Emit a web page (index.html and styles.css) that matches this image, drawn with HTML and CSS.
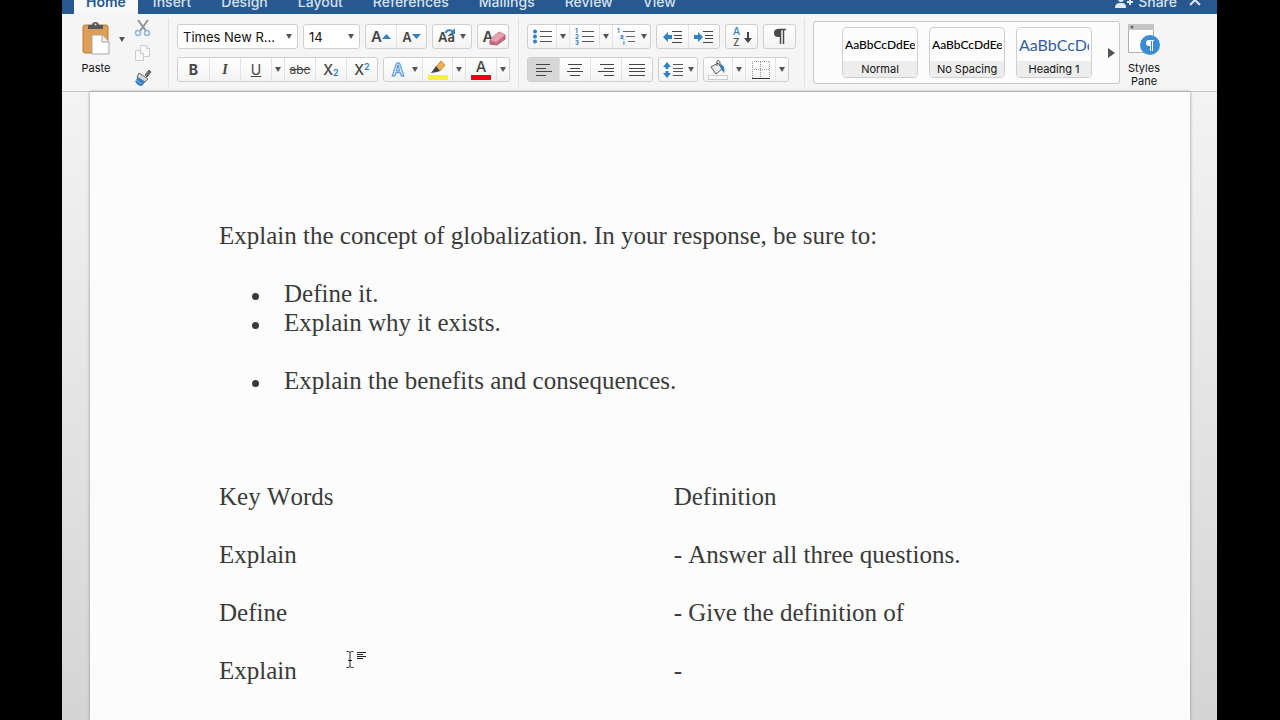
FILE: index.html
```html
<!DOCTYPE html>
<html lang="en">
<head>
  <meta charset="UTF-8">
  <meta name="viewport" content="width=device-width, initial-scale=1.0">
  <title>Document</title>
  <link rel="stylesheet" href="styles.css">
</head>
<body>
  <div class="app">
    <nav class="tabs">
      <a href="#" class="tab active">Home</a>
      <a href="#" class="tab">Insert</a>
      <a href="#" class="tab">Design</a>
      <a href="#" class="tab">Layout</a>
      <a href="#" class="tab">References</a>
      <a href="#" class="tab">Mailings</a>
      <a href="#" class="tab">Review</a>
      <a href="#" class="tab">View</a>
      <button class="tab share">
        <svg width="20" height="14" viewBox="0 0 20 14" fill="#dfe8f4"><circle cx="7" cy="4" r="3"/><path d="M1 13c0-4 2-5 6-5s5 1 5 5z"/><path d="M13 6h6v2h-6zM15 4h2v6h-2z"/></svg>
        Share
      </button>
      <button class="tab collapse" aria-label="Collapse ribbon">
        <svg width="12" height="8" viewBox="0 0 12 8" fill="none" stroke="#dfe8f4" stroke-width="2"><path d="M1 7l5-5 5 5"/></svg>
      </button>
    </nav>

    <header class="ribbon">
      <!-- Clipboard -->
      <section class="clipboard">
        <button class="paste">
          <svg width="29" height="34" viewBox="0 0 29 34"><rect x="1" y="4" width="25" height="28" rx="2" fill="#dd9f55" stroke="#b97d38"/><path d="M6 8V4h4c0-4 7-4 7 0h4v4z" fill="#55585c"/><circle cx="13.500" cy="3.500" r="1" fill="#ddd"/><path d="M10 14h10l7 7v12H10z" fill="#fff" stroke="#a5a5a5"/><path d="M20 14v7h7" fill="#f2f2f2" stroke="#a5a5a5"/></svg>
          <span>Paste</span>
        </button>
        <button class="more" aria-label="Paste options"><i class="caret"></i></button>
        <div class="clip-tools">
          <button aria-label="Cut"><svg width="18" height="18" viewBox="0 0 18 18" fill="none"><path d="M4 1l8 11M14 1L6 12" stroke="#929292" stroke-width="2"/><circle cx="4" cy="14" r="2.500" stroke="#8db8dc" stroke-width="1.500"/><circle cx="13" cy="14" r="2.500" stroke="#8db8dc" stroke-width="1.500"/></svg></button>
          <button aria-label="Copy"><svg width="18" height="18" viewBox="0 0 18 18" fill="#f8f8f8" stroke="#cbcbcb"><path d="M6.500 1.500h6l3 3v8h-9z"/><path d="M12.500 1.500v3h3"/><path d="M1.500 6.500h5l3 3v7h-8z"/><path d="M6.500 6.500v3h3"/></svg></button>
          <button aria-label="Format painter"><svg width="18" height="18" viewBox="0 0 18 18"><path d="M11 6l4-5 2 2-4 5z" fill="#777" stroke="#555"/><path d="M5 4l9 6-3 3-8-5z" fill="#d8d8d8" stroke="#666"/><path d="M3 8l8 5-3 4c-3 0-6-2-7-5 1 0 2-2 2-4z" fill="#367fc0"/><path d="M2 11l6 4" stroke="#8abbe4"/></svg></button>
        </div>
      </section>

      <!-- Font -->
      <section class="group">
        <div class="row">
          <label class="field font-name"><select aria-label="Font"><option>Times New R...</option></select><i class="caret"></i></label>
          <label class="field font-size"><select aria-label="Font size"><option>14</option></select><i class="caret"></i></label>
          <div class="buttons">
            <button class="w30" aria-label="Grow font"><span class="glyph">A</span><svg width="9" height="5" viewBox="0 0 9 5"><path d="M0 5l4.500-5L9 5z" fill="#2f80c4"/></svg></button>
            <button class="w30" aria-label="Shrink font"><span class="glyph small">A</span><svg width="9" height="5" viewBox="0 0 9 5"><path d="M0 0h9L4.500 5z" fill="#2f80c4"/></svg></button>
          </div>
          <div class="buttons">
            <button class="w40" aria-label="Change case"><span class="case"><span class="glyph small">A</span><span class="glyph small">a</span><svg width="11" height="6" viewBox="0 0 11 6"><path d="M1 5c0-3 5-4 7-1" fill="none" stroke="#2f80c4" stroke-width="2"/><path d="M10 0v6H5z" fill="#2f80c4"/></svg></span><i class="caret"></i></button>
          </div>
          <div class="buttons">
            <button class="w30" aria-label="Clear formatting"><span class="erase"><span class="glyph">A</span><svg width="18" height="15" viewBox="0 0 18 15"><path d="M2 9l9-8 6 3v4l-8 6-7-1z" fill="#c66f82" stroke="#a8566a"/><path d="M2 9l9-8 6 3-9 7z" fill="#e9a0b0"/></svg></span></button>
          </div>
        </div>
        <div class="row">
          <div class="buttons">
            <button class="w32"><b>B</b></button>
            <button class="w32 italic"><b>I</b></button>
            <button class="w32"><u>U</u></button>
            <button class="more" aria-label="Underline options"><i class="caret"></i></button>
            <button class="w32 strike"><s>abc</s></button>
            <button class="w32 script">X<sub>2</sub></button>
            <button class="w32 script">X<sup>2</sup></button>
          </div>
          <div class="buttons">
            <button class="w40" aria-label="Text effects"><svg width="18" height="18" viewBox="0 0 18 18"><text x="9" y="15" text-anchor="middle" class="effect">A</text></svg><i class="caret"></i></button>
            <button class="w30" aria-label="Highlight"><svg width="20" height="20" viewBox="0 0 20 20"><path d="M8 7l5-6 4 4-5 6z" fill="#f0b050" stroke="#c78b38"/><path d="M8 6l4 5-3 1-6 1z" fill="#444"/><path d="M0 15h20v5H0z" fill="#f6f03a"/></svg></button>
            <button class="more" aria-label="Highlight colours"><i class="caret"></i></button>
            <button class="w32" aria-label="Font colour"><svg width="20" height="20" viewBox="0 0 20 20"><text x="10" y="12" text-anchor="middle" class="color-a">A</text><path d="M0 15h20v5H0z" fill="#f00012"/></svg></button>
            <button class="more" aria-label="Font colours"><i class="caret"></i></button>
          </div>
        </div>
      </section>

      <!-- Paragraph -->
      <section class="group">
        <div class="row">
          <div class="buttons">
            <button class="w28" aria-label="Bullets"><svg width="19" height="16" viewBox="0 0 19 16"><path d="M7 2.500h12M7 7.500h12M7 12.500h12" stroke="#555"/><g fill="#2f80c4"><circle cx="2" cy="2.500" r="2"/><circle cx="2" cy="7.500" r="2"/><circle cx="2" cy="12.500" r="2"/></g></svg></button>
            <button class="more" aria-label="Bullet styles"><i class="caret"></i></button>
            <button class="w30" aria-label="Numbering"><svg width="19" height="18" viewBox="0 0 19 18"><path d="M7 3.500h12M7 8.500h12M7 13.500h12" stroke="#555"/><g class="digits"><text x="0" y="5">1</text><text x="0" y="11">2</text><text x="0" y="17">3</text></g></svg></button>
            <button class="more" aria-label="Number styles"><i class="caret"></i></button>
            <button class="w40" aria-label="Multilevel list"><svg width="19" height="18" viewBox="0 0 19 18"><path d="M6 3.500h12M9 8.500h9M11 13.500h7" stroke="#666"/><g class="digits"><text x="0" y="5">1</text><text x="3" y="11">a</text><text x="6" y="17">i</text></g></svg><i class="caret"></i></button>
          </div>
          <div class="buttons">
            <button class="w32" aria-label="Decrease indent"><svg width="20" height="14" viewBox="0 0 20 14"><path d="M9 1.500h10M11 5.500h8M11 8.500h8M9 12.500h10" stroke="#444"/><path d="M0 7l5-5v3h4v4H5v3z" fill="#2f80c4"/></svg></button>
            <button class="w32" aria-label="Increase indent"><svg width="20" height="14" viewBox="0 0 20 14"><path d="M9 1.500h10M11 5.500h8M11 8.500h8M9 12.500h10" stroke="#444"/><path d="M9 7L4 2v3H0v4h4v3z" fill="#2f80c4"/></svg></button>
          </div>
          <div class="buttons">
            <button class="w32" aria-label="Sort"><svg width="20" height="20" viewBox="0 0 20 20"><text x="1" y="8" class="sort-a">A</text><text x="1" y="19" class="sort-z">Z</text><path d="M16 5v9" stroke="#444" stroke-width="2"/><path d="M12 11h8l-4 5z" fill="#444"/></svg></button>
          </div>
          <div class="buttons">
            <button class="w32" aria-label="Show formatting marks"><svg width="14" height="17" viewBox="0 0 14 17"><path d="M8 1H5a4 4 0 0 0 0 8h3z" fill="#4a4a4a"/><path d="M5 1.500h8M7.500 1v15M10.500 1v15" stroke="#4a4a4a" stroke-width="1.500"/></svg></button>
          </div>
        </div>
        <div class="row">
          <div class="buttons">
            <button class="w32 pressed" aria-label="Align left"><svg width="16" height="12" viewBox="0 0 16 12" stroke="#444"><path d="M0 .5h14M0 4.500h10M0 7.500h16M0 11.500h10"/></svg></button>
            <button class="w32" aria-label="Centre"><svg width="16" height="12" viewBox="0 0 16 12" stroke="#444"><path d="M1 .5h14M3 4.500h10M0 7.500h16M3 11.500h10"/></svg></button>
            <button class="w32" aria-label="Align right"><svg width="16" height="12" viewBox="0 0 16 12" stroke="#444"><path d="M2 .5h14M6 4.500h10M0 7.500h16M6 11.500h10"/></svg></button>
            <button class="w32" aria-label="Justify"><svg width="16" height="12" viewBox="0 0 16 12" stroke="#444"><path d="M0 .5h16M0 4.500h16M0 7.500h16M0 11.500h16"/></svg></button>
          </div>
          <div class="buttons">
            <button class="w40" aria-label="Line spacing"><svg width="20" height="16" viewBox="0 0 20 16"><path d="M10 2.500h10M10 6.500h10M10 9.500h10M10 13.500h10" stroke="#555"/><path d="M4 0l4 5H5.500v2h-3V5H0zM4 16l4-5H5.500V9h-3v2H0z" fill="#2f80c4"/></svg><i class="caret"></i></button>
          </div>
          <div class="buttons">
            <button class="w28" aria-label="Shading"><svg width="20" height="20" viewBox="0 0 20 20"><path d="M3 7l7-4 4 6-6 5z" fill="#eee" stroke="#555"/><path d="M9 6V1c2-1 3 0 3 2v3" fill="none" stroke="#555"/><path d="M12 4c4 1 5 4 4 9l-3-4z" fill="#2f80c4"/><rect x=".5" y="15.500" width="19" height="4" fill="#fafafa" stroke="#ccc"/></svg></button>
            <button class="more" aria-label="Shading colours"><i class="caret"></i></button>
            <button class="w30" aria-label="Borders"><svg width="20" height="20" viewBox="0 0 20 20" fill="none" stroke="#999"><path d="M1.500 18V1.500h17V18M9.500 2v16M1 9.500h18" stroke-dasharray="1 1"/><path d="M1 18.500h18" stroke="#333"/></svg></button>
            <button class="more" aria-label="Border styles"><i class="caret"></i></button>
          </div>
        </div>
      </section>

      <!-- Styles -->
      <section class="styles">
        <div class="gallery">
          <button class="style"><span class="sample">AaBbCcDdEe</span><span class="style-name">Normal</span></button>
          <button class="style"><span class="sample">AaBbCcDdEe</span><span class="style-name">No Spacing</span></button>
          <button class="style"><span class="sample heading">AaBbCcDc</span><span class="style-name">Heading 1</span></button>
          <button class="next" aria-label="More styles"><svg width="7" height="10" viewBox="0 0 7 10"><path d="M0 0l7 5-7 5z" fill="#555"/></svg></button>
        </div>
        <button class="pane">
          <svg width="32" height="34" viewBox="0 0 32 34"><path d="M.5 2.500h25v27H.5z" fill="#fcfcfc" stroke="#b0b0b0"/><path d="M0 1h26v6H0z" fill="#c4c4c4"/><circle cx="4" cy="4" r="1.500" fill="#666"/><circle cx="22" cy="22" r="10" fill="#3b8cd2"/><path d="M22 17h-1a3 3 0 0 0 0 6h1z" fill="#fff"/><path d="M20 17.500h6M22.500 17v11M24.500 17v11" stroke="#fff"/></svg>
          <span>Styles Pane</span>
        </button>
      </section>
    </header>

    <main class="workspace">
      <article class="page">
        <p>Explain the concept of globalization. In your response, be sure to:</p>
        <ul>
          <li>Define it.</li>
          <li>Explain why it exists.</li>
          <li class="spaced">Explain the benefits and consequences.</li>
        </ul>
        <table>
          <tr><th>Key Words</th><th>Definition</th></tr>
          <tr><td>Explain</td><td>- Answer all three questions.</td></tr>
          <tr><td>Define</td><td>- Give the definition of</td></tr>
          <tr><td>Explain</td><td>-</td></tr>
        </table>
        <svg class="cursor" width="20" height="19" viewBox="0 0 20 19" fill="none" stroke="#222"><path d="M.5 1.500c2 0 3 0 3.500 1 .5-1 1.500-1 3.500-1M4 2.500v14M.5 17.500c2 0 3 0 3.500-1 .5 1 1.500 1 3.500 1M2 10.500h4"/><path d="M11 2.500h9M11 4.500h6M11 6.500h9M11 8.500h6"/></svg>
      </article>
    </main>
  </div>
</body>
</html>
```
FILE: styles.css
```css
* {
  box-sizing: border-box;
}

body {
  margin: 0;
  padding: 0 63px 0 62px;
  background: #000;
  font-family: Inter, sans-serif;
  font-size: 11px;
  color: #111;
}

button {
  display: flex;
  align-items: center;
  justify-content: center;
  padding: 0;
  border: none;
  background: none;
  font: inherit;
  color: inherit;
}

svg {
  display: block;
  flex-shrink: 0;
}

.app {
  display: flex;
  flex-direction: column;
  height: 100vh;
  overflow: hidden;
}

/* Ribbon tabs */
.tabs {
  display: flex;
  align-items: flex-end;
  flex-shrink: 0;
  height: 14px;
  padding: 0 16px 0 12px;
  overflow: hidden;
  background: #27588f;
}

.tab {
  height: 24px;
  padding: 0 15px;
  font-size: 14px;
  font-weight: 500;
  line-height: 24px;
  color: #d5e1f0;
  text-decoration: none;
}

.tab.active {
  padding: 0 12px;
  background: #f8f8f8;
  color: #27588f;
  font-weight: 600;
}

.share {
  gap: 4px;
  margin-left: auto;
  padding: 0 12px;
}

.collapse {
  padding: 0;
}

/* Ribbon */
.ribbon {
  display: flex;
  flex-shrink: 0;
  height: 78px;
  border-bottom: 1px solid #c4c4c4;
  background: #f5f5f5;
}

.clipboard {
  display: flex;
  width: 106px;
  padding: 5px 0 0 14px;
}

.paste {
  flex-direction: column;
  justify-content: flex-start;
  gap: 6px;
  width: 40px;
  padding-top: 2px;
}

.clipboard .more {
  width: 12px;
  height: 40px;
}

.clip-tools {
  display: flex;
  flex-direction: column;
  gap: 7px;
  margin-left: 6px;
}

.group {
  display: flex;
  flex-direction: column;
  gap: 8px;
  margin: 4px 0;
  padding: 6px 8px 0 8px;
  border-left: 1px solid #e2e2e2;
}

.row {
  display: flex;
  gap: 5px;
}

.field,
.buttons {
  display: flex;
  align-items: center;
  height: 25px;
  border: 1px solid #cfcfcf;
  border-radius: 3px;
}

.field {
  padding-right: 5px;
  background: #fff;
}

.field select {
  flex: 1;
  min-width: 0;
  height: 23px;
  padding: 0 0 0 5px;
  appearance: none;
  border: none;
  background: none;
  font: 13px Inter, sans-serif;
  color: #111;
}

.font-name {
  width: 121px;
}

.font-size {
  width: 57px;
}

.buttons {
  background: linear-gradient(#fff, #f3f3f3);
  color: #444;
  overflow: hidden;
}

.buttons button {
  height: 23px;
  font-size: 14px;
  border-left: 1px solid #e2e2e2;
}

.buttons button:first-child {
  border-left: none;
}

.buttons .pressed {
  background: #d6d6d6;
}

.buttons .more {
  width: 13px;
}

.w28 { width: 28px; }
.w30 { width: 30px; }
.w32 { width: 31px; }

.w40 {
  gap: 5px;
  width: 38px;
}

.caret {
  flex-shrink: 0;
  border: 3px solid transparent;
  border-top: 5px solid #555;
  border-bottom: none;
}

.glyph {
  font-size: 15px;
  font-weight: 600;
}

.small {
  font-size: 13px;
}

.case,
.erase {
  position: relative;
}

.case svg {
  position: absolute;
  top: 0;
  left: 7px;
}

.erase {
  padding-right: 10px;
}

.erase svg {
  position: absolute;
  top: 4px;
  left: 5px;
}

.italic {
  font-family: "Liberation Serif", serif;
  font-style: italic;
}

.buttons .strike {
  font-size: 12px;
}

.script {
  font-weight: 500;
}

.script sub,
.script sup {
  font-size: 9px;
  font-weight: 600;
  line-height: 9px;
  color: #2f80c4;
}

.script sub {
  align-self: flex-end;
  padding-bottom: 4px;
}

.script sup {
  align-self: flex-start;
  padding-top: 4px;
}

.effect {
  font-size: 17px;
  font-weight: 600;
  fill: #fff;
  stroke: #3d8fd0;
}

.color-a {
  font-size: 15px;
  font-weight: 500;
  fill: #444;
}

.digits {
  font-size: 6px;
  font-weight: 700;
  fill: #2f80c4;
}

.sort-a,
.sort-z {
  font-size: 10px;
  font-weight: 500;
  fill: #2f80c4;
}

.sort-z {
  fill: #555;
}

/* Styles gallery */
.styles {
  display: flex;
  flex: 1;
  gap: 7px;
  margin: 4px 0;
  padding: 3px 0 0 8px;
  border-left: 1px solid #e2e2e2;
}

.gallery {
  display: flex;
  align-items: center;
  gap: 11px;
  height: 63px;
  padding-left: 28px;
  border: 1px solid #c9c9c9;
  border-radius: 3px;
  background: #fcfcfc;
}

.style {
  flex-direction: column;
  width: 76px;
  height: 51px;
  border: 1px solid #cfcfcf;
  border-radius: 4px;
  overflow: hidden;
}

.sample {
  flex: 1;
  width: 70px;
  font: 500 12px/34px Lato, sans-serif;
  text-align: center;
  color: #000;
  overflow: hidden;
}

.heading {
  font-size: 16px;
  font-weight: 400;
  color: #35609f;
  text-align: left;
}

.style-name {
  width: 100%;
  background: #ededed;
  line-height: 16px;
}

.next {
  width: 16px;
  height: 51px;
}

.pane {
  flex-direction: column;
  justify-content: flex-start;
  gap: 5px;
  width: 34px;
  padding-top: 2px;
  line-height: 13px;
}

/* Document */
.workspace {
  flex: 1;
  min-height: 0;
  padding: 0 27px 0 28px;
  background: linear-gradient(#f3f3f3, #d4d4d4);
}

.page {
  position: relative;
  height: 100%;
  padding: 129px 129px 0;
  background: #fcfcfc;
  box-shadow: 0 0 3px #888;
  font: 25px/29px "Liberation Serif", serif;
  font-kerning: none;
  color: #3a3a3a;
}

.page p {
  margin: 0 0 29px;
}

.page ul {
  margin: 0 0 87px;
  padding: 0 0 0 33px;
  list-style: none;
}

.page li {
  display: flex;
  align-items: center;
}

.page li::before {
  content: "";
  width: 7px;
  height: 7px;
  margin: 6px 25px 0 0;
  border-radius: 50%;
  background: #3a3a3a;
}

.page .spaced {
  margin-top: 29px;
}

.page table {
  width: 100%;
  border-collapse: collapse;
  table-layout: fixed;
}

.page th,
.page td {
  padding: 0 0 29px;
  font-weight: normal;
  text-align: left;
}

.page th:first-child {
  width: 54%;
}

.cursor {
  position: absolute;
  top: 558px;
  left: 256px;
}
```
